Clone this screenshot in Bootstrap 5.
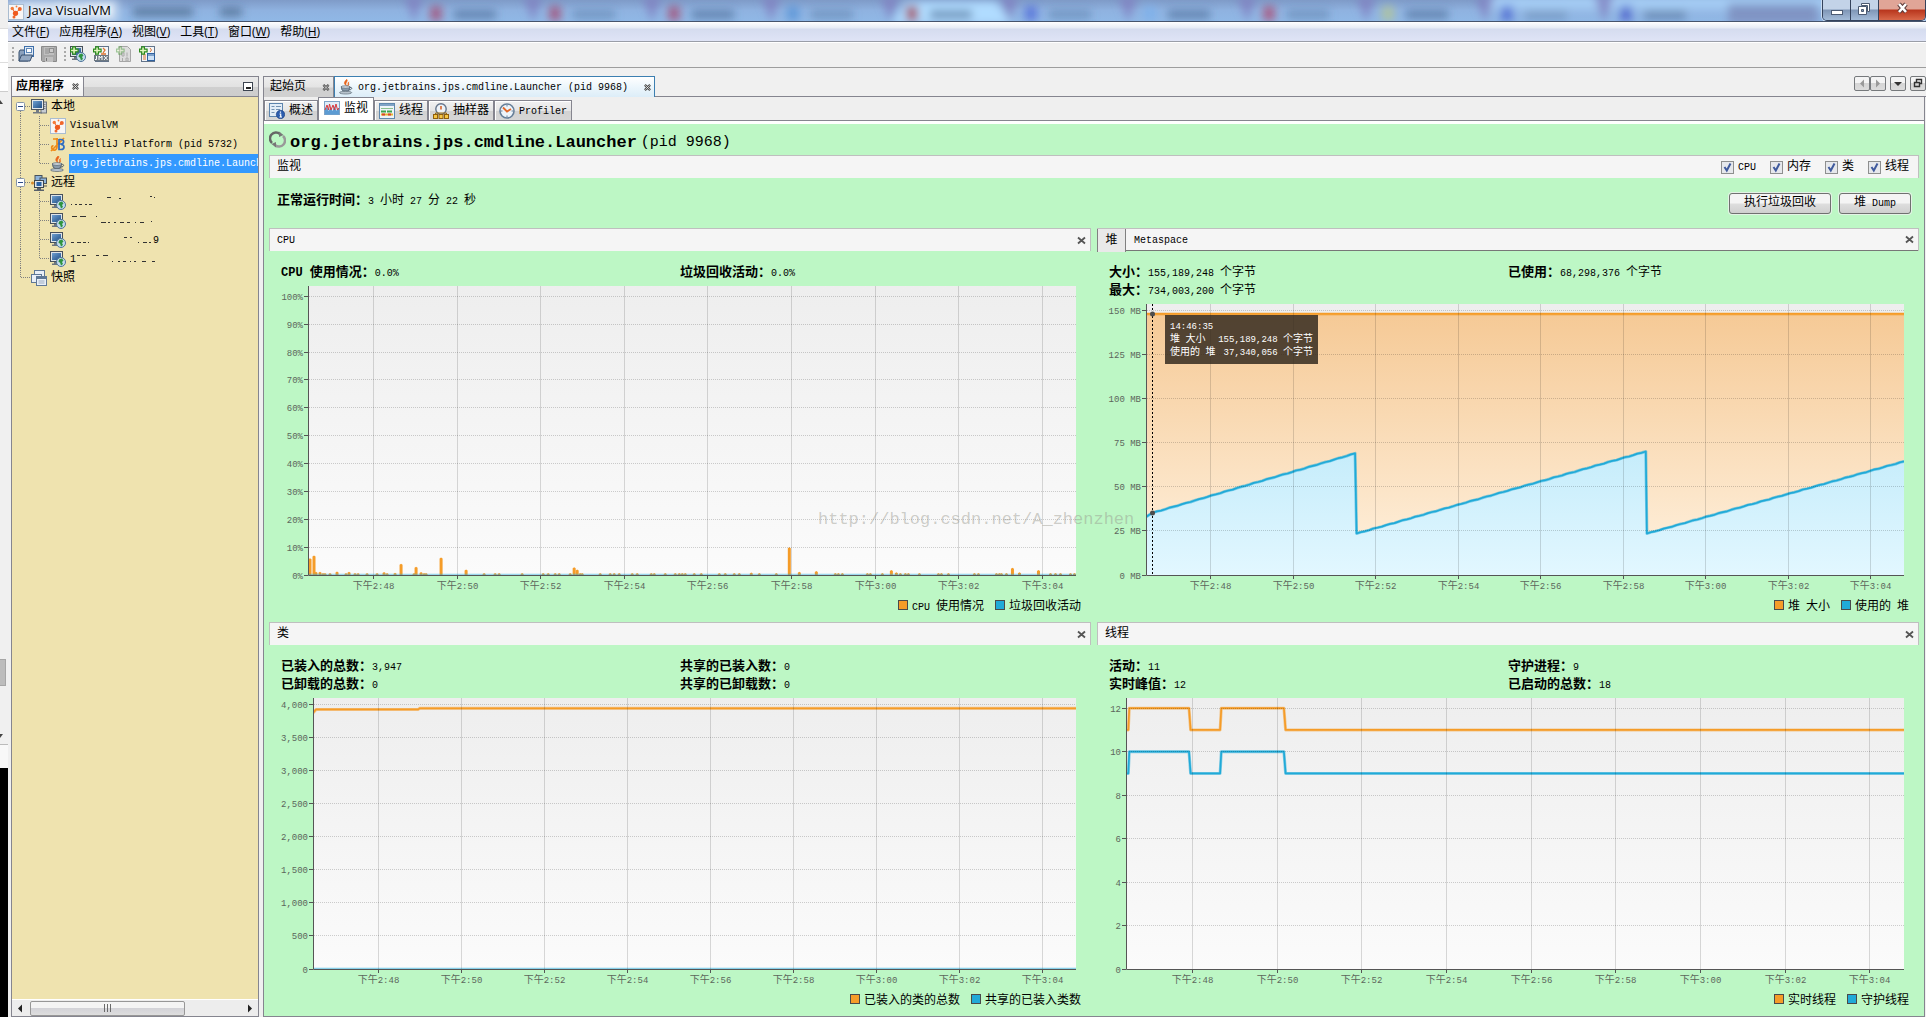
<!DOCTYPE html>
<html lang="zh-CN">
<head>
<meta charset="utf-8">
<meta name="viewport" content="width=device-width, initial-scale=1">
<title>Java VisualVM</title>
<link href="https://cdn.jsdelivr.net/npm/bootstrap@5.3.0/dist/css/bootstrap.min.css" rel="stylesheet">
<style>
  body{font:12px/18px "Liberation Mono","Noto Sans CJK SC",monospace;color:#000;background:#f0f0f0;overflow:hidden}
  button{font:inherit;color:inherit}
  .lt{font-size:10px;line-height:10px;white-space:pre}
  b .lt{font-size:12px}
  svg{display:block;flex:none}
  .ui-font{font-family:"Open Sans","Noto Sans CJK SC",sans-serif}

  /* sliver of the window behind */
  .behind{width:8px;background:#f0f0f0}
  .behind .bh-top{height:29px;background:#efefef;border-bottom:1px solid #ddd}
  .behind .bh-white{height:63px;background:linear-gradient(#fff 33px,#ddd 33px,#ddd 34px,#fff 34px);border-bottom:1px solid #ccc}
  .behind .bh-thumb{width:6px;height:27px;background:#bcbcbc;border:1px solid #a6a6a6;border-left:0}
  .behind .bh-black{height:249px;background:#000}
  .behind .bh-foot{height:24px;background:#f8f8f8;border-top:1px solid #bbb}

  /* title bar */
  .titlebar{height:22px;border-bottom:1px solid #46546c;background:#86a8d6;overflow:hidden}
  .titlebar .aero{width:100%;height:21px}
  .caption-text{font-size:13px;line-height:21px;text-shadow:0 0 6px #fff,0 0 6px #fff,0 0 8px #fff}
  .winbtns{height:21px;border:1px solid #35435c;border-top:0;border-radius:0 0 5px 5px;overflow:hidden;box-shadow:0 0 0 1px #c9dcf2}
  .winbtns button{border:0;padding:0;height:20px;width:28px;background:linear-gradient(#c3d3e8 45%,#7f96b6 50%,#a3bbd8);border-right:1px solid #35435c}
  .winbtns .wclose{width:46px;border-right:0;background:linear-gradient(#e0a597 45%,#b8351c 50%,#d8684a)}

  .menubar{height:20px;background:linear-gradient(#fff,#e6ebf5 6px,#d5dcef 7px,#dfe4f6);border-bottom:1px solid #9a9ea8;padding-left:4px;gap:10px}
  .menubar button{border:0;background:none;padding:0;font-size:12px;line-height:18px}
  .toolbar{height:26px;border-top:1px solid #fff;border-bottom:1px solid #9d9d9d;padding:0 0 2px 4px;margin-bottom:8px;gap:7px}
  .toolbar button,.plain{border:0;background:none;padding:0}
  .grip{width:2px;height:15px;margin-right:-3px;background:repeating-linear-gradient(#aaa 0 2px,transparent 2px 4px)}

  /* application tree */
  .side{width:248px;border:1px solid #85858f;margin-left:3px}
  .side-head{height:20px;background:linear-gradient(#eaeaea,#e2e2e2 50%,#cfcfcf 55%,#cdcdcd);border-bottom:1px solid #85858f}
  .side-tab{width:72px;background:linear-gradient(#fff,#f0f0f0);border-right:1px solid #85858f;padding-left:4px}
  .tree{background:#efe3af;overflow:hidden}
  .tree-row{height:19px}
  .tree-row .node{padding-left:4px;white-space:nowrap}
  .tree-row .kid{margin-left:3px;padding-left:1px;line-height:19px;white-space:nowrap;flex:1;overflow:hidden}
  .tree-row .stub{margin-left:4px}
  .tree-row .picked{background:#3399ff;color:#fff}
  .hscroll{height:17px;background:#ededed;border-top:1px solid #fff}
  .hthumb{width:155px;height:15px;border:1px solid #979797;border-radius:2px;background:linear-gradient(#f4f4f4 45%,#d3d3d8 50%,#dedede)}

  /* document area */
  .docs{margin-left:4px}
  .doc-strip{height:21px}
  .doc-tab{border:1px solid #85858f;border-bottom:0;height:21px;background:linear-gradient(#eee,#e4e4e4 50%,#d0d0d0 55%,#d0d0d0);padding:0 3px 0 6px}
  .doc-tab.current{border-color:#3c7fb1;background:linear-gradient(#fff,#ecf6fc 50%,#dcedf8);padding-left:4px}
  .doc-rest{border-bottom:1px solid #85858f}
  .nudge{height:15px;min-width:16px;border:1px solid #76797c;border-radius:2px;background:linear-gradient(#f4f4f4 45%,#d5d5d5 50%,#dcdcdc);padding:0}
  .frame-box{border:1px solid #85858f;border-top:0;min-height:0;margin-right:1px}
  .view-strip{height:24px;background:#efefef;border-bottom:1px solid #85858f;padding-top:2px}
  .view-tab{border:1px solid #85858f;border-bottom:0;background:linear-gradient(#f1f1f1,#e6e6e6 50%,#d2d2d2 55%,#d6d6d6);height:20px;padding:0 4px;gap:4px;box-shadow:inset 1px 1px #fff}
  .view-tab.current{height:23px;background:#fff;padding:0 5px}
  .page-area{background:#bdf7c5;border-top:3px solid #fff;padding:0 5px;min-height:0}
  .big-name{height:31px;font-size:17px;line-height:24px;padding-top:6px}
  .big-name svg{margin:0 4px 7px 0}
  .big-name span{font-size:15px}
  .bar{height:23px;background:#f5f5f5;border:1px solid #bfbfbf;border-bottom:0;padding:0 9px 0 7px}
  .bar.sections{padding:0}
  .bar .sec-now{width:29px;height:23px;background:#e9e9e9;border:0;border-right:1px solid #808080;border-left:1px solid #808080;margin-left:-1px}
  .bar .sec-other{border:0;border-bottom:1px solid #777;background:none;text-align:left;height:22px;padding:0 0 0 8px}
  .bar.sections .plain{border-bottom:1px solid #777;height:22px;padding-right:4px}
  .checks{gap:14px}
  .checks span{gap:4px}
  .form-check-input.tick{width:13px;height:13px;margin:0;border:1px solid #8e8f8f;border-radius:0;background-color:#e9eaec;background-size:11px 11px;float:none}
  .form-check-input.tick:checked{background-color:#e6e8ec;border-color:#8e8f8f;--bs-form-check-bg-image:url("data:image/svg+xml,%3Csvg xmlns='http://www.w3.org/2000/svg' viewBox='0 0 11 11'%3E%3Cpath d='M2.5 5l2.3 3.5L8.5 1.5' fill='none' stroke='%233f5a9d' stroke-width='2'/%3E%3C/svg%3E")}
  .uptime{height:50px;padding:0 8px}
  .act{height:21px;border:1px solid #707070;border-radius:3px;background:linear-gradient(#f4f4f4 48%,#dedede 52%,#cfcfcf);box-shadow:0 0 0 1px #e4f2e6;padding:0 14px;line-height:18px}
  .pane-row{gap:6px;flex:1 1 0;min-height:0}
  .pane{flex:1 1 0;min-width:0}
  .facts{padding:13px 12px 0}
  .fact{height:18px;white-space:nowrap}
  .fact b,.uptime b{font-size:13px}
  .plot{flex:1 1 0;min-height:0;overflow:hidden}
  .plot svg text{fill:#5c665c;font-size:10px}
  .plot svg .num{font-size:9px}
  .legend-row{height:26px;padding:0 10px 5px;gap:11px}
  .legend-row i{display:inline-block;width:10px;height:10px;border:1px solid #4a4a4a;margin-right:4px}
  .c-or{background:#f59c28}.c-bl{background:#20aad8}
  .tipbox{left:68px;top:15px;width:153px;height:49px;background:rgba(50,40,30,.84);color:#fff;padding:5px;line-height:13px;font-size:10px}
  .tipbox .lt{font-size:9px}
  .wmark{left:818px;top:507px;font:17px/26px "Liberation Mono",monospace;color:rgba(150,150,140,.45);pointer-events:none}
</style>
</head>
<body>
<svg width="0" height="0" class="position-absolute" aria-hidden="true">
  <defs>
    <linearGradient id="scr" x1="0" y1="0" x2="1" y2="1"><stop offset="0" stop-color="#6f9fd0"/><stop offset="1" stop-color="#1f4f88"/></linearGradient>
    <symbol id="i-vm" viewBox="0 0 16 16"><rect x=".5" y=".5" width="15" height="15" fill="#f8f6f6" stroke="#a9bcd0"/><path d="M7 9L4.500 4.500M7.500 9L12 5M7 9.500l-1 4" stroke="#f0662a" stroke-width="1"/><circle cx="4.300" cy="4.500" r="1.700" fill="#f47b3a"/><circle cx="11.800" cy="5" r="2" fill="#f0662a"/><circle cx="7.500" cy="9.300" r="2.600" fill="#ee5a1f"/><circle cx="6" cy="13" r="1.500" fill="#f0662a"/><circle cx="8.500" cy="2.500" r=".9" fill="#f47b3a"/></symbol>
    <symbol id="i-pc" viewBox="0 0 16 16"><rect x="10" y="3" width="5.500" height="11" fill="#c7ccd2" stroke="#6d747c"/><path d="M11.500 5.500h3M11.500 7.500h3M11.500 9.500h3" stroke="#7e858d"/><rect x=".5" y=".5" width="12" height="10" fill="#e3e7ea" stroke="#4d555e"/><rect x="2" y="2" width="9" height="7" fill="url(#scr)"/><path d="M5 11h3v2h3v1.500H2V13h3z" fill="#737b84"/></symbol>
    <symbol id="i-net" viewBox="0 0 16 16"><rect x="4" y=".5" width="7" height="6" fill="#8eb3da" stroke="#49525b"/><rect x="9" y="3" width="6.500" height="5.500" fill="#8eb3da" stroke="#49525b"/><rect x="3.500" y="5.500" width="9" height="7" fill="#dfe5ea" stroke="#3c444c"/><rect x="5.500" y="7" width="5" height="4" fill="#2a62a4"/><path d="M6 13h4v1.500h3V16H3v-1.500h3z" fill="#59616a"/><circle cx="1.500" cy="8" r="1.500" fill="#d88a2a"/><path d="M3 8h1M13 11h3" stroke="#555"/></symbol>
    <symbol id="i-host" viewBox="0 0 16 16"><rect x=".5" y=".5" width="12" height="10" fill="#dfe4e8" stroke="#47505a"/><rect x="2" y="2" width="9" height="7" fill="url(#scr)"/><path d="M4 11h4v3H2v-1.500h2z" fill="#6d757e"/><circle cx="11" cy="11" r="4.500" fill="#c5dcee" stroke="#4e7498"/><path d="M9 8.500l3-1 1.500 2-1.500 1.500 1 2-2 1.500-1-3-1.500-.5z" fill="#2f9440"/></symbol>
    <symbol id="i-java" viewBox="0 0 16 16"><path d="M8.500 0C10 2 6 3.500 8 6.500c-3-1.500-3-3.500 0-6.500zM10.500 2.500C8.500 4 10.500 5 9 7 12 5.500 9.500 4.500 10.500 2.500z" fill="#e8641b" stroke="#e8641b" stroke-width=".6"/><path d="M2.500 7.500h9c0 3-1 4.500-2.500 5H5C3.500 12 2.500 10.500 2.500 7.500z" fill="#8a9aaa" stroke="#4c5b69"/><ellipse cx="7" cy="8" rx="4.500" ry="1.300" fill="#d8dfe6" stroke="#4c5b69" stroke-width=".7"/><path d="M11.500 8.500c3-.8 3 2.500-1 2.700" fill="none" stroke="#4c5b69"/><ellipse cx="7" cy="14" rx="6.500" ry="1.500" fill="#b8c3cd" stroke="#56636f" stroke-width=".7"/></symbol>
    <symbol id="i-jb" viewBox="0 0 16 16"><path d="M7 1v9c0 3-3 4-4.500 2.500S1.500 8.500 3.500 9M3 2h5M1 14L14 1" fill="none" stroke="#f08a17" stroke-width="1.700"/><path d="M9 2.500h2c3.500 0 3.500 4.500 0 4.500H9.500M11 7.500c4 0 4 5 0 5H9V2" fill="none" stroke="#2f6cc0" stroke-width="1.700"/></symbol>
    <symbol id="i-snap" viewBox="0 0 16 16"><g fill="#e9eff7" stroke="#5f7896"><rect x="3.500" y=".5" width="10" height="8"/><rect x=".5" y="4.500" width="10" height="8"/><rect x="5.500" y="6.500" width="10" height="9"/></g><path d="M5.500 8h10" stroke="#5f7896" stroke-width="2"/><path d="M7.500 11h6M7.500 13h6" stroke="#9babc0"/></symbol>
    <symbol id="plus" viewBox="0 0 10 10"><path d="M3 1h3v2.500h3v3H6V9H3V6.500H.5v-3H3z" fill="#e3f6c0" stroke="#2b8a1c" stroke-width="1.300"/></symbol>
    <symbol id="i-open" viewBox="0 0 16 16"><path d="M1 15V6l1-2h4l1 2h3v9z" fill="#8ba1bd" stroke="#38506f"/><rect x="6.500" y=".5" width="9" height="10" fill="#dfeaf6" stroke="#3f6fa9"/><rect x="8.500" y="2.500" width="5" height="4" fill="#fff" stroke="#5d86b7"/><path d="M1 15l2.500-6h11L12 15z" fill="#94a8c1" stroke="#38506f"/></symbol>
    <symbol id="i-save" viewBox="0 0 16 16"><path d="M.5.5h15v15h-14l-1-1z" fill="#a9a9a9" stroke="#8a8a8a"/><rect x="3" y="1" width="10" height="8" fill="#bfbfbf"/><path d="M4 3h4M4 5h4M4 7h4" stroke="#8f8f8f"/><rect x="8.500" y="2.500" width="4" height="4" fill="#ccc" stroke="#8f8f8f"/><rect x="4" y="11" width="8" height="5" fill="#c0c0c0"/><path d="M5.500 12v3" stroke="#777"/></symbol>
    <symbol id="i-jmx" viewBox="0 0 16 16"><rect x="2.500" y=".5" width="13" height="15" fill="#f3f5f8" stroke="#63748a"/><path d="M10 2l2 2-2 3M8 8h5" stroke="#db7432" fill="none" stroke-width="1.300"/><rect x="1" y="9" width="15" height="6" fill="#6e7983"/><path d="M3.500 10v3.500H2M6 14v-4l1.500 2L9 10v4M11 10l3.500 4M14.500 10L11 14" stroke="#fff" fill="none"/></symbol>
    <symbol id="i-dump" viewBox="0 0 16 16"><path d="M3.500.5h8l3 3v12h-11z" fill="#ddd" stroke="#a5a5a5"/><path d="M6 7h2v3H6zM11 6.500v4M6.500 12v3M10 12h2v3h-2z" fill="none" stroke="#aaa"/></symbol>
    <symbol id="i-app" viewBox="0 0 16 16"><rect x="2.500" y=".5" width="13" height="15" fill="#f3f5f8" stroke="#63748a"/><path d="M11 2l1.500 2L11 6M4 9h3M4 11h3M4 13h3" stroke="#db7432" fill="none"/><rect x="8.500" y="7.500" width="7" height="7" fill="#cfe2f6" stroke="#2f62a0"/><path d="M9 9h6" stroke="#2f62a0"/></symbol>
    <symbol id="i-over" viewBox="0 0 16 16"><rect x=".5" y=".5" width="13" height="13" fill="#e3edf7" stroke="#5d84ad"/><path d="M2.500 3.500h3M7 3.500h5M2.500 6.500h3M7 6.500h4M2.500 9.500h3" stroke="#7492b3"/><circle cx="11.500" cy="11.500" r="4.200" fill="#2b5cae" stroke="#173a7c" stroke-width=".6"/><path d="M11.500 8.500v1.300M10.500 11h1.200v2.800M10.500 14h2.500" stroke="#fff" stroke-width="1.200" fill="none"/></symbol>
    <symbol id="i-mon" viewBox="0 0 16 16"><rect x=".5" y=".5" width="15" height="13" fill="#e0edf8" stroke="#7fa3c6"/><path d="M1 13.500V9l2-3 1.500 4 2-3 2 3 2-5 2 5 1.500-3L15 8v5.500z" fill="#5c9bd3"/><path d="M1 9l2-5 1.500 5 1-6 1.500 6 2-5L10.500 9l1.500-6 1.500 6L15 7" stroke="#d9363a" fill="none"/></symbol>
    <symbol id="i-thr" viewBox="0 0 16 16"><rect x=".5" y=".5" width="15" height="15" fill="#eef4f9" stroke="#5f88ae"/><path d="M1 2h14" stroke="#7fa3c6" stroke-width="2"/><path d="M2 5.500h12" stroke="#8ac08f"/><path d="M2 8.500h12" stroke="#3da34a" stroke-width="2" stroke-dasharray="5 1"/><path d="M2 11.500h12" stroke="#e7b52e" stroke-width="2"/><path d="M3 11.500h3M9 11.500h3" stroke="#d9452f" stroke-width="2"/></symbol>
    <symbol id="i-smp" viewBox="0 0 16 16"><circle cx="8" cy="6" r="5.200" fill="#eef3f8" stroke="#64748a" stroke-width="1.400"/><path d="M8 3v3.500" stroke="#d9652b" stroke-width="1.600"/><path d="M2.500 11.500V10h11v1.500" fill="none" stroke="#9a6a12"/><g fill="#f6c644" stroke="#8f5f0c"><rect x=".5" y="11.500" width="4" height="4"/><rect x="6" y="11.500" width="4" height="4"/><rect x="11.500" y="11.500" width="4" height="4"/></g></symbol>
    <symbol id="i-prf" viewBox="0 0 16 16"><circle cx="8" cy="8" r="7" fill="#edf4fa" stroke="#667f99" stroke-width="1.600"/><path d="M4 4.500L8 8.500l4-2.500" fill="none" stroke="#e2692a" stroke-width="1.800"/><path d="M8 2v1.500M8 12.500V14M2 8h1.500M12.500 8H14" stroke="#667f99"/></symbol>
    <symbol id="i-x" viewBox="0 0 8 8"><path d="M1 1l6 6M7 1L1 7" stroke="#4b4b4b" stroke-width="2.600"/><path d="M1.500 1.500l5 5M6.500 1.500l-5 5" stroke="#fff" stroke-width=".8"/></symbol>
    <symbol id="i-shut" viewBox="0 0 9 9"><path d="M1 1.500l7 6M8 1.500l-7 6" stroke="#555" stroke-width="1.800"/></symbol>
    <!-- tree connectors -->
    <g id="box"><rect x="4.500" y="5.500" width="8" height="8" rx="1" fill="#fff" stroke="#8595a8"/><path d="M6 9.500h5" stroke="#2b4a88"/></g>
    <g id="trunk" stroke="#808080" stroke-dasharray="1 1"><path d="M8.500 0v19"/></g>
    <g id="twig" stroke="#808080" stroke-dasharray="1 1"><path d="M27.500 0v19M28 9.500h10"/></g>
    <g id="twig-end" stroke="#808080" stroke-dasharray="1 1"><path d="M27.500 0v10M28 9.500h10"/></g>
  </defs>
</svg>

<div class="d-flex vh-100">
  <div class="behind d-flex flex-column flex-shrink-0">
    <div class="bh-top"></div><div class="bh-white"></div>
    <svg width="8" height="20" viewBox="0 0 8 20"><path d="M0 8l3 4H0z" fill="#444"/></svg>
    <div class="flex-grow-1"></div>
    <div class="bh-thumb"></div>
    <svg width="8" height="58" viewBox="0 0 8 58"><path d="M0 52l3-4H0z" fill="#444"/></svg>
    <div class="bh-foot"></div>
    <div class="bh-black"></div>
  </div>

  <div class="d-flex flex-column flex-grow-1 overflow-hidden">
    <header class="titlebar position-relative flex-shrink-0 ui-font">
      <svg class="aero" id="aero" aria-hidden="true"></svg>
      <div class="position-absolute top-0 start-0 w-100 d-flex">
        <svg width="16" height="16" class="mt-1"><use href="#i-vm"/></svg>
        <span class="caption-text ms-1">Java VisualVM</span>
        <div class="winbtns d-flex ms-auto">
          <button type="button" aria-label="最小化"><svg width="27" height="20"><rect x="8.500" y="10.500" width="11" height="4" fill="#fff" stroke="#4b5a72"/></svg></button>
          <button type="button" aria-label="还原"><svg width="27" height="20"><g fill="#fff" stroke="#4b5a72"><path d="M10.500 3.500h8v8h-2v-6h-6z"/><path d="M7.500 6.500h8v8h-8zM10.500 9.500h2v2h-2z" fill-rule="evenodd"/></g></svg></button>
          <button type="button" class="wclose" aria-label="关闭"><svg width="46" height="20"><path d="M20 4l7 8M27 4l-7 8" stroke="#5c3a38" stroke-width="4.500"/><path d="M20 4l7 8M27 4l-7 8" stroke="#fff" stroke-width="2.600"/></svg></button>
        </div>
      </div>
    </header>
    <nav class="menubar d-flex align-items-center flex-shrink-0 ui-font">
      <button type="button">文件(<u>F</u>)</button><button type="button">应用程序(<u>A</u>)</button><button type="button">视图(<u>V</u>)</button><button type="button">工具(<u>T</u>)</button><button type="button">窗口(<u>W</u>)</button><button type="button">帮助(<u>H</u>)</button>
    </nav>
    <div class="toolbar d-flex align-items-center flex-shrink-0">
      <div class="grip"></div>
      <button type="button" aria-label="打开"><svg width="16" height="16"><use href="#i-open"/></svg></button>
      <button type="button" aria-label="保存"><svg width="16" height="16"><use href="#i-save"/></svg></button>
      <div class="grip"></div>
      <button type="button" aria-label="添加主机"><svg width="16" height="16"><use href="#i-host"/><use href="#plus" width="9" height="9"/></svg></button>
      <button type="button" aria-label="添加 JMX"><svg width="16" height="16"><use href="#i-jmx"/><use href="#plus" width="9" height="9"/></svg></button>
      <button type="button" aria-label="添加核心转储"><svg width="16" height="16"><use href="#i-dump"/><use href="#plus" width="9" height="9" opacity=".4"/></svg></button>
      <button type="button" aria-label="添加快照"><svg width="16" height="16"><use href="#i-app"/><use href="#plus" width="9" height="9"/></svg></button>
    </div>

    <div class="d-flex flex-grow-1 overflow-hidden">
      <aside class="side d-flex flex-column flex-shrink-0">
        <div class="side-head d-flex align-items-stretch">
          <div class="side-tab d-flex align-items-center"><b>应用程序</b><button type="button" class="plain ms-2" aria-label="关闭"><svg width="7" height="7"><use href="#i-x"/></svg></button></div>
          <button type="button" class="plain ms-auto me-1" aria-label="最小化"><svg width="11" height="10"><rect x=".5" y=".5" width="9" height="8" fill="#fff" stroke="#3c4450"/><path d="M3 6h5" stroke="#222" stroke-width="2"/></svg></button>
        </div>
        <div class="tree flex-grow-1">
          <div class="tree-row d-flex align-items-center"><svg width="19" height="19"><path d="M8.500 14v5M13 9.500h6" stroke="#808080" stroke-dasharray="1 1"/><use href="#box"/></svg><svg width="16" height="16"><use href="#i-pc"/></svg><span class="node">本地</span></div>
          <div class="tree-row d-flex align-items-center"><svg width="38" height="19"><use href="#trunk"/><use href="#twig"/></svg><svg width="16" height="16"><use href="#i-vm"/></svg><span class="kid t">VisualVM</span></div>
          <div class="tree-row d-flex align-items-center"><svg width="38" height="19"><use href="#trunk"/><use href="#twig"/></svg><svg width="16" height="16"><use href="#i-jb"/></svg><span class="kid t">IntelliJ Platform (pid 5732)</span></div>
          <div class="tree-row d-flex align-items-center"><svg width="38" height="19"><use href="#trunk"/><use href="#twig-end"/></svg><svg width="16" height="16"><use href="#i-java"/></svg><span class="kid picked t">org.jetbrains.jps.cmdline.Launcher</span></div>
          <div class="tree-row d-flex align-items-center"><svg width="19" height="19"><use href="#trunk"/><path d="M13 9.500h6" stroke="#808080" stroke-dasharray="1 1"/><use href="#box"/></svg><svg width="16" height="16"><use href="#i-net"/></svg><span class="node">远程</span></div>
          <div class="tree-row d-flex align-items-center"><svg width="38" height="19"><use href="#trunk"/><use href="#twig"/></svg><svg width="16" height="16"><use href="#i-host"/></svg><svg width="100" height="19"><path d="M5 12.500h1M9 12.500h2M13 12.500h3M19 12.500h2M23 12.500h3M41 5.500h4M53 6.500h2M84 4.500h2M88 5.500h1" stroke="#333"/></svg></div>
          <div class="tree-row d-flex align-items-center"><svg width="38" height="19"><use href="#trunk"/><use href="#twig"/></svg><svg width="16" height="16"><use href="#i-host"/></svg><svg width="100" height="19"><path d="M6 5.500h5M14 5.500h6M30 5.500h1M35 11.500h5M42 11.500h2M48 11.500h2M54 11.500h4M61 11.500h3M69 11.500h1M74 11.500h4M85 10.500h1" stroke="#333"/></svg></div>
          <div class="tree-row d-flex align-items-center"><svg width="38" height="19"><use href="#trunk"/><use href="#twig"/></svg><svg width="16" height="16"><use href="#i-host"/></svg><svg width="87" height="19"><path d="M5 12.500h3M11 12.500h4M17 12.500h3M22 12.500h1M58 7.500h3M64 7.500h2M72 12.500h1M77 12.500h4M83 12.500h2" stroke="#333"/></svg><span class="t">9</span></div>
          <div class="tree-row d-flex align-items-center"><svg width="38" height="19"><use href="#trunk"/><use href="#twig-end"/></svg><svg width="16" height="16"><use href="#i-host"/></svg><span class="stub t">1</span><svg width="90" height="19"><path d="M1 6.500h3M6 6.500h4M20 6.500h3M27 6.500h5M36 12.500h1M42 12.500h2M47 12.500h3M54 12.500h1M58 12.500h2M66 12.500h4M76 12.500h3" stroke="#333"/></svg></div>
          <div class="tree-row d-flex align-items-center"><svg width="19" height="19"><path d="M8.500 0v10M9 9.500h10" stroke="#808080" stroke-dasharray="1 1"/></svg><svg width="16" height="16"><use href="#i-snap"/></svg><span class="node">快照</span></div>
        </div>
        <div class="hscroll d-flex align-items-center">
          <svg width="18" height="15"><path d="M10 3.500v8L6 7.500z" fill="#222"/></svg>
          <div class="hthumb d-flex align-items-center justify-content-center"><svg width="9" height="8"><path d="M1.500 0v8M4.500 0v8M7.500 0v8" stroke="#6a6a6a"/></svg></div>
          <svg width="18" height="15" class="ms-auto"><path d="M8 3.500v8l4-4z" fill="#222"/></svg>
        </div>
      </aside>

      <main class="docs d-flex flex-column flex-grow-1 overflow-hidden">
        <div class="doc-strip d-flex flex-shrink-0">
          <div class="doc-tab d-flex align-items-center"><span>起始页</span><svg width="8" height="7" class="ms-3"><use href="#i-x"/></svg></div>
          <div class="doc-tab current d-flex align-items-center"><svg width="15" height="16" class="me-1"><use href="#i-java"/></svg><span class="t">org.jetbrains.jps.cmdline.Launcher (pid 9968)</span><svg width="7" height="7" class="ms-3"><use href="#i-x"/></svg></div>
          <div class="doc-rest d-flex flex-grow-1 justify-content-end align-items-start">
            <button type="button" class="nudge" aria-label="向左"><svg width="14" height="13"><path d="M9 2.500v8l-4-4z" fill="#999"/></svg></button>
            <button type="button" class="nudge me-1" aria-label="向右"><svg width="14" height="13"><path d="M5 2.500v8l4-4z" fill="#999"/></svg></button>
            <button type="button" class="nudge me-1" aria-label="列表"><svg width="14" height="13"><path d="M3 5h8l-4 4z" fill="#333"/></svg></button>
            <button type="button" class="nudge" aria-label="还原"><svg width="14" height="13"><path d="M5.500 5V2.500h5v4H9M3.500 5.500h5v4h-5z" fill="none" stroke="#333" stroke-width="1.400"/></svg></button>
          </div>
        </div>

        <div class="frame-box d-flex flex-column flex-grow-1">
          <div class="view-strip d-flex align-items-end flex-shrink-0">
            <button type="button" class="view-tab d-flex align-items-center"><svg width="16" height="16"><use href="#i-over"/></svg><span>概述</span></button>
            <button type="button" class="view-tab current d-flex align-items-center"><svg width="16" height="16"><use href="#i-mon"/></svg><span>监视</span></button>
            <button type="button" class="view-tab d-flex align-items-center"><svg width="16" height="16"><use href="#i-thr"/></svg><span>线程</span></button>
            <button type="button" class="view-tab d-flex align-items-center"><svg width="16" height="16"><use href="#i-smp"/></svg><span>抽样器</span></button>
            <button type="button" class="view-tab d-flex align-items-center"><svg width="16" height="16"><use href="#i-prf"/></svg><span class="t">Profiler</span></button>
          </div>
          <div class="page-area d-flex flex-column flex-grow-1">
            <h1 class="big-name d-flex align-items-center m-0 flex-shrink-0 fw-bold"><svg width="17" height="17" viewBox="0 0 17 17"><path d="M3 12A6 6 0 0 1 11 3" fill="none" stroke="#666" stroke-width="2.500"/><path d="M14 5A6 6 0 0 1 6 14" fill="none" stroke="#999" stroke-width="2.500"/><path d="M10 .5L14.500 4 10 6zM7 11v5.500L2.500 13z" fill="#777"/></svg>org.jetbrains.jps.cmdline.Launcher<span class="fw-normal ms-1">(pid 9968)</span></h1>
            <div class="bar d-flex align-items-center flex-shrink-0">
              <span class="me-auto">监视</span>
              <div class="checks d-flex align-items-center">
                <span class="d-flex align-items-center"><input class="form-check-input tick" type="checkbox" id="k1" checked><label for="k1" class="t">CPU</label></span>
                <span class="d-flex align-items-center"><input class="form-check-input tick" type="checkbox" id="k2" checked><label for="k2">内存</label></span>
                <span class="d-flex align-items-center"><input class="form-check-input tick" type="checkbox" id="k3" checked><label for="k3">类</label></span>
                <span class="d-flex align-items-center"><input class="form-check-input tick" type="checkbox" id="k4" checked><label for="k4">线程</label></span>
              </div>
            </div>
            <div class="uptime d-flex align-items-center flex-shrink-0">
              <div class="me-auto pb-1"><b>正常运行时间：</b><span class="t">3 小时 27 分 22 秒</span></div>
              <button type="button" class="act me-2">执行垃圾回收</button><button type="button" class="act"><span class="t">堆 Dump</span></button>
            </div>

            <div class="pane-row d-flex">
              <section class="pane d-flex flex-column">
                <div class="bar d-flex align-items-center flex-shrink-0 pe-1"><span class="t me-auto">CPU</span><button type="button" class="plain" aria-label="关闭"><svg width="9" height="9"><use href="#i-shut"/></svg></button></div>
                <div class="facts row g-0"><div class="col-6"><div class="fact"><b class="t">CPU 使用情况：</b><span class="t">0.0%</span></div></div><div class="col-6"><div class="fact"><b>垃圾回收活动：</b><span class="t">0.0%</span></div></div></div>
                <div class="plot position-relative" id="p-cpu"></div>
                <div class="legend-row d-flex justify-content-end align-items-center"><span><i class="c-or"></i><span class="t">CPU 使用情况</span></span><span><i class="c-bl"></i>垃圾回收活动</span></div>
              </section>
              <section class="pane d-flex flex-column">
                <div class="bar sections d-flex align-items-start flex-shrink-0"><button type="button" class="sec-now">堆</button><button type="button" class="sec-other flex-grow-1"><span class="t">Metaspace</span></button><button type="button" class="plain" aria-label="关闭"><svg width="9" height="9"><use href="#i-shut"/></svg></button></div>
                <div class="facts row g-0"><div class="col-6"><div class="fact"><b>大小：</b><span class="t">155,189,248 个字节</span></div><div class="fact"><b>最大：</b><span class="t">734,003,200 个字节</span></div></div><div class="col-6"><div class="fact"><b>已使用：</b><span class="t">68,298,376 个字节</span></div></div></div>
                <div class="plot position-relative" id="p-heap"><div class="tipbox position-absolute"><div class="t">14:46:35</div><div class="d-flex justify-content-between"><span class="t">堆 大小</span><span class="t">155,189,248 个字节</span></div><div class="d-flex justify-content-between"><span class="t">使用的 堆</span><span class="t">37,340,056 个字节</span></div></div></div>
                <div class="legend-row d-flex justify-content-end align-items-center"><span><i class="c-or"></i><span class="t">堆 大小</span></span><span><i class="c-bl"></i><span class="t">使用的 堆</span></span></div>
              </section>
            </div>
            <div class="pane-row d-flex">
              <section class="pane d-flex flex-column">
                <div class="bar d-flex align-items-center flex-shrink-0 pe-1"><span class="me-auto">类</span><button type="button" class="plain" aria-label="关闭"><svg width="9" height="9"><use href="#i-shut"/></svg></button></div>
                <div class="facts row g-0"><div class="col-6"><div class="fact"><b>已装入的总数：</b><span class="t">3,947</span></div><div class="fact"><b>已卸载的总数：</b><span class="t">0</span></div></div><div class="col-6"><div class="fact"><b>共享的已装入数：</b><span class="t">0</span></div><div class="fact"><b>共享的已卸载数：</b><span class="t">0</span></div></div></div>
                <div class="plot position-relative" id="p-cls"></div>
                <div class="legend-row d-flex justify-content-end align-items-center"><span><i class="c-or"></i>已装入的类的总数</span><span><i class="c-bl"></i>共享的已装入类数</span></div>
              </section>
              <section class="pane d-flex flex-column">
                <div class="bar d-flex align-items-center flex-shrink-0 pe-1"><span class="me-auto">线程</span><button type="button" class="plain" aria-label="关闭"><svg width="9" height="9"><use href="#i-shut"/></svg></button></div>
                <div class="facts row g-0"><div class="col-6"><div class="fact"><b>活动：</b><span class="t">11</span></div><div class="fact"><b>实时峰值：</b><span class="t">12</span></div></div><div class="col-6"><div class="fact"><b>守护进程：</b><span class="t">9</span></div><div class="fact"><b>已启动的总数：</b><span class="t">18</span></div></div></div>
                <div class="plot position-relative" id="p-thr"></div>
                <div class="legend-row d-flex justify-content-end align-items-center"><span><i class="c-or"></i>实时线程</span><span><i class="c-bl"></i>守护线程</span></div>
              </section>
            </div>
          </div>
        </div>
      </main>
    </div>
  </div>
</div>
<div class="wmark position-absolute">http://blog.csdn.net/A_zhenzhen</div>

<script src="https://cdn.jsdelivr.net/npm/bootstrap@5.3.0/dist/js/bootstrap.bundle.min.js"></script>
<script>
// Latin runs are set at half the width of the Chinese characters
document.querySelectorAll('.t').forEach(function (el) {
  el.innerHTML = el.textContent.replace(/[\x20-\x7e]+/g, '<span class="lt">$&</span>');
});

var OR = '#f59c28', BL = '#20aad8';
var times = ['2:48', '2:50', '2:52', '2:54', '2:56', '2:58', '3:00', '3:02', '3:04'];
function steps(lo) {
  return [[0, lo], [.003, lo], [.0042, lo + 1], [.081, lo + 1], [.083, lo], [.121, lo], [.1225, lo + 1], [.203, lo + 1], [.2052, lo], [1, lo]];
}
// sawtooth of the used heap with a slight ripple on the slopes
function ripple(pts) {
  var out = [];
  for (var i = 0; i < pts.length - 1; i++) {
    var a = pts[i], b = pts[i + 1], n = Math.max(1, Math.round((b[0] - a[0]) * 180));
    for (var k = 0; k < n; k++) {
      out.push([a[0] + (b[0] - a[0]) * k / n, a[1] + (b[1] - a[1]) * k / n + (k ? Math.sin(k * 1.9) * .14 : 0)]);
    }
  }
  out.push(pts[pts.length - 1]);
  return out;
}
var spikes = [[2,6],[6,7],[8,1.2],[12,1.2],[29,1.3],[41,1.2],[76,1.1],[87,.8],[93,4],[108,3],[113,1.1],[133,6.3],[158,2],[266,2.8],[269,2],[443,.9],[481,10],[491,1.2],[508,1.4],[583,1.8],[588,1],[704,2.6],[711,1],[730,1.8]];
[15,17,22,38,47,50,59,69,79,106,116,118,176,187,191,214,235,240,247,251,262,272,274,292,302,306,311,324,329,343,346,357,367,371,374,377,386,393,411,417,426,431,451,468,527,530,534,559,562,574,592,597,600,611,630,633,640,666,670,688,691,693,698,742,747,752,762,766].forEach(function (x) { spikes.push([x, .7]); });

var charts = {
  'p-cpu': { left: 39, max: 103.7, step: 10, end: 100, lab: function (v) { return v + '%'; }, bars: spikes, lines: [[BL, [[0, 0], [1, 0]], .5]] },
  'p-heap': { left: 49, max: 153.6, step: 25, end: 150, lab: function (v) { return v + ' MB'; }, fill: true, mark: .0086,
    lines: [[OR, [[0, 148], [1, 148]]], [BL, ripple([[0, 32.8], [.0086, 35.2], [.2759, 68.9], [.2779, 23.5], [.6594, 70], [.6608, 23.5], [1, 64.4]])]] },
  'p-cls': { left: 44, max: 4095, step: 500, end: 4000, lab: function (v) { return v.toLocaleString('en-US'); },
    lines: [[OR, [[0, 3870], [.004, 3922], [.138, 3922], [.14, 3940], [1, 3940]]], [BL, [[0, 0], [1, 0]], .6]] },
  'p-thr': { left: 29, max: 12.47, step: 2, end: 12, lab: String, lines: [[OR, steps(11)], [BL, steps(9)]] }
};

function draw(id) {
  var host = document.getElementById(id), c = charts[id], W = host.clientWidth, H = host.clientHeight;
  var L = c.left, R = W - 15, T = 4, B = H - 21, w = R - L, h = B - T;
  var X = function (f) { return L + w * f; }, Y = function (v) { return B - h * v / c.max; };
  var half = function (n) { return Math.floor(n) + .5; };
  var s = '<defs><linearGradient id="' + id + 'g" x2="0" y2="1"><stop stop-color="#eeeeee"/><stop offset="1" stop-color="#fbfbfb"/></linearGradient>' +
    '<linearGradient id="' + id + '0" gradientUnits="userSpaceOnUse" x1="0" x2="0" y1="' + T + '" y2="' + B + '"><stop stop-color="#f5c893"/><stop offset="1" stop-color="#fff2e0"/></linearGradient>' +
    '<linearGradient id="' + id + '1" gradientUnits="userSpaceOnUse" x1="0" x2="0" y1="' + T + '" y2="' + B + '"><stop stop-color="#a4e0f6"/><stop offset="1" stop-color="#e2f7ff"/></linearGradient>' +
    '<clipPath id="' + id + 'c"><rect x="' + L + '" y="' + T + '" width="' + w + '" height="' + h + '"/></clipPath></defs>';
  s += '<rect x="' + L + '" y="' + T + '" width="' + w + '" height="' + h + '" fill="url(#' + id + 'g)"/><g clip-path="url(#' + id + 'c)">';
  (c.bars || []).forEach(function (b) {
    s += '<path d="M' + (X(b[0] / 767.5) - 1.5) + ' ' + B + 'V' + (Y(b[1]) + 1) + 'l1.500 -1l1.500 1V' + B + 'z" fill="' + OR + '"/>';
  });
  c.lines.forEach(function (l, i) {
    var d = l[1].map(function (p) { return X(p[0]).toFixed(1) + ' ' + Y(p[1]).toFixed(1); }).join('L');
    if (c.fill) s += '<path d="M' + d + 'V' + B + 'H' + L + 'z" fill="url(#' + id + i + ')"/>';
    s += '<g fill="none" stroke="' + l[0] + '" stroke-linejoin="round" opacity="' + (l[2] || 1) + '"><path d="M' + d + '" stroke-width="3" opacity=".5"/><path d="M' + d + '" stroke-width="1.700"/></g>';
  });
  s += '</g>';
  for (var v = 0; v <= c.end; v += c.step) {
    var y = half(Y(v));
    if (v) s += '<path d="M' + (L + 1) + ' ' + y + 'H' + R + '" stroke="#000" stroke-opacity=".18" stroke-dasharray="1 1"/>';
    s += '<path d="M' + (L - 4) + ' ' + y + 'h4" stroke="#555"/><text class="num" text-anchor="end" x="' + (L - 5) + '" y="' + (y + 3) + '">' + c.lab(v) + '</text>';
  }
  times.forEach(function (t, i) {
    var x = half(X(.0855 + .1088 * i));
    s += '<path d="M' + x + ' ' + T + 'V' + B + '" stroke="#000" stroke-opacity=".14"/><path d="M' + x + ' ' + B + 'v4" stroke="#555"/>' +
      '<text text-anchor="middle" x="' + x + '" y="' + (B + 14) + '">下午<tspan class="num">' + t + '</tspan></text>';
  });
  s += '<path d="M' + (L + .5) + ' ' + T + 'V' + (B + .5) + 'H' + R + '" fill="none" stroke="#555"/>';
  if (c.mark) {
    var m = half(X(c.mark));
    s += '<path d="M' + m + ' ' + T + 'V' + B + '" stroke="#000" stroke-dasharray="2 2"/><circle cx="' + m + '" cy="' + Y(148) + '" r="2.500" fill="#4d4d4d"/><circle cx="' + m + '" cy="' + Y(35.2) + '" r="2.500" fill="#4d4d4d"/>';
  }
  var old = host.querySelector('svg');
  if (old) old.remove();
  host.insertAdjacentHTML('afterbegin', '<svg width="' + W + '" height="' + H + '">' + s + '</svg>');
}

// frosted glass: tabs of a browser showing through the title bar
function glass() {
  var s = '<defs><filter id="bl" x="-5%" y="-50%" width="110%" height="200%"><feGaussianBlur stdDeviation="4"/></filter><linearGradient id="gl" x2="0" y2="1"><stop stop-color="#7f9bc8"/><stop offset=".5" stop-color="#8fb2e0"/><stop offset="1" stop-color="#90b8e6"/></linearGradient></defs><rect width="100%" height="21" fill="url(#gl)"/><g filter="url(#bl)">';
  s += '<rect x="1480" y="-4" width="340" height="14" fill="#a5cdf5"/><rect x="1720" y="4" width="90" height="20" fill="#8094c4"/><rect x="0" y="0" width="110" height="22" fill="#c9dcf2"/><path d="M125 12h60M212 12h22" stroke="#33506f" stroke-width="8" opacity=".6"/>';
  var dots = ['#a8456a', '#a8456a', '#a8456a', '#4e8fd6', '#a02c3c', '#4a63d8', '#79b0ee', '#b0446a', '#b9c98a', '#3f5bd0', '#3a50c8'];
  dots.forEach(function (col, i) {
    var x = 408 + 119 * i;
    if (i === 4) s += '<path d="M' + x + ' 24l14-22h90l16 22z" fill="#b0dcff"/>';
    s += '<path d="M' + (x + 8) + ' -4h-20l10 26z" fill="#7f7fc0" opacity=".8"/><rect x="' + (x + 14) + '" y="6" width="12" height="15" fill="' + col + '" opacity=".7"/><rect x="' + (x + 38) + '" y="10" width="42" height="9" fill="#3f5f88" opacity="' + (i % 2 ? .35 : .55) + '"/>';
  });
  document.getElementById('aero').innerHTML = s + '</g>';
}
function all() { Object.keys(charts).forEach(draw); }
glass(); all();
addEventListener('resize', all);
</script>
</body>
</html>
